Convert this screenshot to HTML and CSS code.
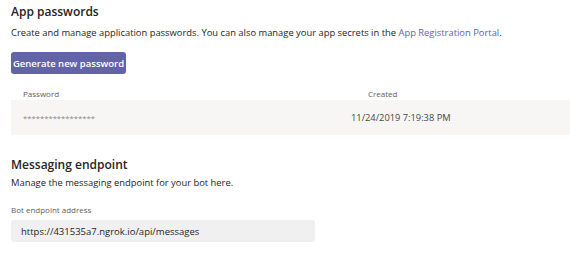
FILE: index.html
```html
<!DOCTYPE html>
<html lang="en">
<head>
    <meta charset="UTF-8">
    <title>Bot settings</title>
    <link rel="stylesheet" href="styles.css">
</head>
<body>
    <div class="page">
        <section class="section">
            <h2 class="section-title">App passwords</h2>
            <p class="section-desc">Create and manage application passwords. You can also manage your app secrets in the <a href="#" class="link">App Registration Portal</a>.</p>
            <button class="primary-btn">Generate new password</button>

            <div class="table">
                <div class="table-head">
                    <span class="col-pass">Password</span>
                    <span class="col-created">Created</span>
                </div>
                <div class="table-row">
                    <span class="col-pass stars">*****************</span>
                    <span class="col-date">11/24/2019 7:19:38 PM</span>
                </div>
            </div>
        </section>

        <section class="section endpoint">
            <h2 class="section-title">Messaging endpoint</h2>
            <p class="section-desc">Manage the messaging endpoint for your bot here.</p>
            <label class="field-label" for="endpoint">Bot endpoint address</label>
            <input class="field-input" id="endpoint" type="text" value="https://431535a7.ngrok.io/api/messages">
        </section>
    </div>
</body>
</html>
```

FILE: styles.css
```css
body {
    margin: 0;
    font-family: "Open Sans", "Noto Sans", sans-serif;
    color: #252423;
    background: #fff;
}

.page {
    padding: 4px 0 0 11px;
}

.section-title {
    margin: 0;
    font-size: 12px;
    font-weight: 600;
    line-height: 16px;
}

.section-desc {
    margin: 6px 0 0;
    font-size: 9.4px;
    line-height: 14px;
}

.link {
    color: #6264a7;
    text-decoration: none;
}

.primary-btn {
    display: block;
    margin-top: 12px;
    height: 22px;
    width: 115px;
    padding: 0;
    border: none;
    border-radius: 3px;
    background-color: #6264a7;
    color: #fff;
    font-family: inherit;
    font-size: 9.5px;
    font-weight: 600;
    white-space: nowrap;
}

.table {
    margin-top: 13px;
}

.table-head {
    display: flex;
    height: 13px;
    font-size: 8px;
    line-height: 13px;
    color: #605e5c;
}

.table-row {
    display: flex;
    align-items: center;
    height: 35px;
    background: #f7f6f5;
    font-size: 9.3px;
    color: #484644;
}

.col-pass {
    box-sizing: border-box;
    width: 340px;
    padding-left: 12px;
}

.col-created {
    padding-left: 17px;
}

.stars {
    font-size: 7.7px;
    color: #8a8886;
}

.endpoint {
    margin-top: 22px;
}

.endpoint .section-desc {
    margin-top: 3px;
}

.field-label {
    display: block;
    margin-top: 14px;
    font-size: 8px;
    line-height: 12px;
    color: #605e5c;
}

.field-input {
    display: block;
    margin-top: 4px;
    width: 304px;
    height: 22px;
    box-sizing: border-box;
    padding: 0 10px;
    border: none;
    border-radius: 3px;
    background: #f0f0f0;
    font-family: inherit;
    font-size: 9.5px;
    color: #252423;
}
```
